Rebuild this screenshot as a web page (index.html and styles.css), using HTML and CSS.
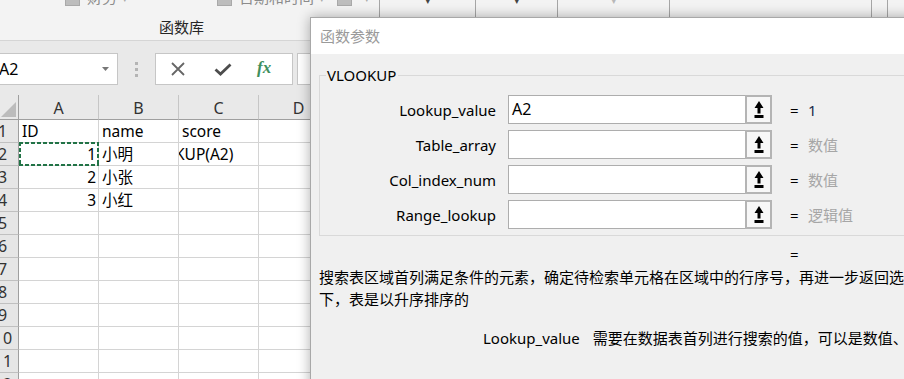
FILE: index.html
```html
<!DOCTYPE html>
<html lang="zh-CN">
<head>
    <meta charset="UTF-8">
    <title>函数参数</title>
    <link rel="stylesheet" href="styles.css">
</head>
<body>
<div class="excel">
    <div class="ribbon">
        <div class="ribbon-strip">
            <span class="rb-gap"></span>
            <span class="rb-item rb-w1"><i class="rb-icon"></i>财务<b class="rb-caret">▾</b></span>
            <span class="rb-item rb-w2"><i class="rb-icon"></i>日期和时间<b class="rb-caret">▾</b></span>
            <span class="rb-item rb-w3"><i class="rb-icon"></i><b class="rb-caret">▾</b></span>
            <span class="rb-seg rb-s1"><b class="rb-dark">▾</b></span>
            <span class="rb-seg rb-s2"><b class="rb-dark">▾</b></span>
            <span class="rb-seg rb-s3"><b class="rb-light">▾</b></span>
            <span class="rb-seg rb-s4"></span>
            <span class="rb-seg rb-s5"></span>
            <span class="rb-seg rb-s6"></span>
        </div>
        <div class="ribbon-group">函数库</div>
    </div>

    <div class="formula-bar">
        <div class="name-box">
            <span>A2</span>
            <svg width="7" height="4" viewBox="0 0 7 4"><polygon points="0,0 7,0 3.5,4" fill="#777"/></svg>
        </div>
        <div class="fb-grip"><i></i><i></i><i></i></div>
        <div class="fb-buttons">
            <svg width="14" height="14" viewBox="0 0 14 14"><path d="M1 1 L13 13 M13 1 L1 13" stroke="#666" stroke-width="1.8" fill="none"/></svg>
            <svg width="18" height="13" viewBox="0 0 18 13"><path d="M1.5 6.5 L6.5 11 L16.5 1.5" stroke="#4d4d4d" stroke-width="2.8" fill="none"/></svg>
            <span class="fx">fx</span>
        </div>
        <div class="fb-input"></div>
    </div>

    <div class="sheet">
        <div class="cell corner"><svg width="15" height="15" viewBox="0 0 15 15"><polygon points="15,0 15,15 0,15" fill="#bcbcbc"/></svg></div>
        <div class="cell ch">A</div>
        <div class="cell ch">B</div>
        <div class="cell ch">C</div>
        <div class="cell ch">D</div>
        <div class="cell ch">E</div>

        <div class="cell rh">1</div>
        <div class="cell">ID</div>
        <div class="cell">name</div>
        <div class="cell">score</div>
        <div class="cell"></div>
        <div class="cell"></div>

        <div class="cell rh">2</div>
        <div class="cell num copied">1</div>
        <div class="cell">小明</div>
        <div class="cell editing">KUP(A2)</div>
        <div class="cell"></div>
        <div class="cell"></div>

        <div class="cell rh">3</div>
        <div class="cell num">2</div>
        <div class="cell">小张</div>
        <div class="cell"></div>
        <div class="cell"></div>
        <div class="cell"></div>

        <div class="cell rh">4</div>
        <div class="cell num">3</div>
        <div class="cell">小红</div>
        <div class="cell"></div>
        <div class="cell"></div>
        <div class="cell"></div>

        <div class="cell rh">5</div>
        <div class="cell"></div><div class="cell"></div><div class="cell"></div><div class="cell"></div><div class="cell"></div>
        <div class="cell rh">6</div>
        <div class="cell"></div><div class="cell"></div><div class="cell"></div><div class="cell"></div><div class="cell"></div>
        <div class="cell rh">7</div>
        <div class="cell"></div><div class="cell"></div><div class="cell"></div><div class="cell"></div><div class="cell"></div>
        <div class="cell rh">8</div>
        <div class="cell"></div><div class="cell"></div><div class="cell"></div><div class="cell"></div><div class="cell"></div>
        <div class="cell rh">9</div>
        <div class="cell"></div><div class="cell"></div><div class="cell"></div><div class="cell"></div><div class="cell"></div>
        <div class="cell rh">10</div>
        <div class="cell"></div><div class="cell"></div><div class="cell"></div><div class="cell"></div><div class="cell"></div>
        <div class="cell rh">11</div>
        <div class="cell"></div><div class="cell"></div><div class="cell"></div><div class="cell"></div><div class="cell"></div>
        <div class="cell rh">12</div>
        <div class="cell"></div><div class="cell"></div><div class="cell"></div><div class="cell"></div><div class="cell"></div>
    </div>
</div>

<div class="dialog">
    <div class="dlg-title">函数参数</div>
    <div class="dlg-body">
        <fieldset class="fn-group">
            <legend>VLOOKUP</legend>

            <div class="arg-row">
                <label class="arg-label">Lookup_value</label>
                <div class="arg-box">
                    <div class="arg-text">A2</div>
                    <div class="arg-btn">
                        <svg width="10" height="17" viewBox="0 0 10 17"><polygon points="5,0 9.5,7 6.5,7 6.5,12.5 3.5,12.5 3.5,7 0.5,7" fill="#000"/><rect x="0.5" y="14" width="9" height="3" fill="#000"/></svg>
                    </div>
                </div>
                <span class="arg-eq">=</span>
                <span class="arg-val">1</span>
            </div>

            <div class="arg-row">
                <label class="arg-label">Table_array</label>
                <div class="arg-box">
                    <div class="arg-text"></div>
                    <div class="arg-btn">
                        <svg width="10" height="17" viewBox="0 0 10 17"><polygon points="5,0 9.5,7 6.5,7 6.5,12.5 3.5,12.5 3.5,7 0.5,7" fill="#000"/><rect x="0.5" y="14" width="9" height="3" fill="#000"/></svg>
                    </div>
                </div>
                <span class="arg-eq">=</span>
                <span class="arg-val hint">数值</span>
            </div>

            <div class="arg-row">
                <label class="arg-label">Col_index_num</label>
                <div class="arg-box">
                    <div class="arg-text"></div>
                    <div class="arg-btn">
                        <svg width="10" height="17" viewBox="0 0 10 17"><polygon points="5,0 9.5,7 6.5,7 6.5,12.5 3.5,12.5 3.5,7 0.5,7" fill="#000"/><rect x="0.5" y="14" width="9" height="3" fill="#000"/></svg>
                    </div>
                </div>
                <span class="arg-eq">=</span>
                <span class="arg-val hint">数值</span>
            </div>

            <div class="arg-row">
                <label class="arg-label">Range_lookup</label>
                <div class="arg-box">
                    <div class="arg-text"></div>
                    <div class="arg-btn">
                        <svg width="10" height="17" viewBox="0 0 10 17"><polygon points="5,0 9.5,7 6.5,7 6.5,12.5 3.5,12.5 3.5,7 0.5,7" fill="#000"/><rect x="0.5" y="14" width="9" height="3" fill="#000"/></svg>
                    </div>
                </div>
                <span class="arg-eq">=</span>
                <span class="arg-val hint">逻辑值</span>
            </div>
        </fieldset>

        <div class="result">=</div>

        <div class="desc">
            <div>搜索表区域首列满足条件的元素，确定待检索单元格在区域中的行序号，再进一步返回选定单元格的值。默认情况</div>
            <div>下，表是以升序排序的</div>
        </div>

        <div class="arg-help">
            <span class="help-name">Lookup_value</span>
            <span>需要在数据表首列进行搜索的值，可以是数值、引用或字符串</span>
        </div>
    </div>
</div>
</body>
</html>
```

FILE: styles.css
```css
body {
    margin: 0;
    width: 904px;
    height: 379px;
    overflow: hidden;
    position: relative;
    background: #ffffff;
    font-family: "Noto Sans", "Noto Sans CJK SC", sans-serif;
    color: #000;
}

/* ---- Ribbon ---- */
.ribbon {
    height: 40px;
    background: #f3f3f3;
    border-bottom: 1px solid #d5d5d5;
}

.ribbon-strip {
    display: flex;
    height: 17px;
    overflow: hidden;
    font-size: 15px;
    color: #8c8c8c;
}

.rb-gap {
    width: 65px;
    flex: none;
}

.rb-item {
    flex: none;
    display: flex;
    align-items: flex-start;
    margin-top: -11px;
    line-height: 17px;
}

.rb-w1 { width: 152px; }
.rb-w2 { width: 120px; }
.rb-w3 { width: 42px; }

.rb-icon {
    width: 15px;
    height: 15px;
    margin: 2px 7px 0 0;
    background: #bdbdbd;
    border: 1px solid #a9a9a9;
    box-sizing: border-box;
}

.rb-caret {
    font-weight: normal;
    font-size: 11px;
    color: #a8a8a8;
    margin-left: 5px;
}

.rb-seg {
    flex: none;
    border-left: 1px solid #a6a6a6;
    box-sizing: border-box;
    display: flex;
    justify-content: center;
    align-items: flex-start;
    font-size: 11px;
    line-height: 6px;
}

.rb-s1 { width: 96px; }
.rb-s2 { width: 82px; }
.rb-s3 { width: 112px; }
.rb-s4 { width: 202px; }
.rb-s5 { width: 16px; }
.rb-s6 { width: 40px; }

.rb-dark, .rb-light {
    font-weight: normal;
    margin-top: -3px;
    color: #444;
}

.rb-light {
    color: #b8b8b8;
}

.ribbon-group {
    padding-left: 159px;
    font-size: 15px;
    line-height: 21px;
    color: #262626;
}

/* ---- Formula bar ---- */
.formula-bar {
    height: 54px;
    background: #e9e9e9;
    display: flex;
    align-items: flex-start;
    padding-top: 12px;
    box-sizing: border-box;
}

.name-box {
    width: 118px;
    height: 32px;
    box-sizing: border-box;
    background: #fff;
    border: 1px solid #c6c6c6;
    border-left: none;
    display: flex;
    align-items: center;
    justify-content: space-between;
    padding-right: 8px;
    font-size: 16px;
}

.name-box span {
    margin-left: -1px;
}

.fb-grip {
    width: 37px;
    height: 32px;
    display: flex;
    flex-direction: column;
    align-items: center;
    justify-content: center;
    gap: 3px;
}

.fb-grip i {
    width: 3px;
    height: 3px;
    background: #b4b4b4;
}

.fb-buttons {
    width: 138px;
    height: 32px;
    box-sizing: border-box;
    background: #fff;
    border: 1px solid #c6c6c6;
    display: flex;
    align-items: center;
    padding-left: 15px;
    gap: 29px;
}

.fx {
    font-family: "Liberation Serif", serif;
    font-style: italic;
    font-weight: bold;
    font-size: 17px;
    color: #3f8f5e;
    margin-left: -4px;
    margin-top: -2px;
}

.fb-input {
    margin-left: 4px;
    width: 200px;
    height: 32px;
    box-sizing: border-box;
    background: #fff;
    border: 1px solid #c6c6c6;
}

/* ---- Sheet grid ---- */
.sheet {
    display: grid;
    grid-template-columns: 31px repeat(5, 80px);
    grid-template-rows: 25px repeat(12, 23px);
    margin-left: -12px;
    font-size: 15.5px;
}

.cell {
    box-sizing: border-box;
    border-right: 1px solid #d4d4d4;
    border-bottom: 1px solid #d4d4d4;
    padding: 0 3px;
    line-height: 22px;
    white-space: nowrap;
    overflow: hidden;
    position: relative;
}

.corner {
    background: #e9e9e9;
    border-right: 1px solid #9f9f9f;
    border-bottom: 1px solid #9f9f9f;
    display: flex;
    justify-content: flex-end;
    align-items: flex-end;
    padding: 0 2px 2px 0;
}

.ch {
    background: #e9e9e9;
    border-right: 1px solid #c6c6c6;
    border-bottom: 1px solid #9f9f9f;
    text-align: center;
    font-size: 16px;
    line-height: 26px;
    color: #333;
}

.rh {
    background: #e6e6e6;
    border-right: 1px solid #9f9f9f;
    border-bottom: 1px solid #c0c0c0;
    display: flex;
    justify-content: center;
    font-size: 16px;
    letter-spacing: 1px;
    color: #333;
    padding: 0;
}

.num {
    text-align: right;
    padding-right: 2px;
}

.editing {
    padding-left: 0;
    text-indent: -4px;
}

.copied {
    overflow: visible;
}

.copied::after {
    content: "";
    position: absolute;
    left: 0;
    top: -1px;
    right: -1px;
    bottom: -1px;
    background:
        repeating-linear-gradient(90deg, #217346 0 4px, transparent 4px 6px) top / 100% 2px no-repeat,
        repeating-linear-gradient(90deg, #217346 0 4px, transparent 4px 6px) bottom / 100% 2px no-repeat,
        repeating-linear-gradient(180deg, #217346 0 4px, transparent 4px 6px) left / 2px 100% no-repeat,
        repeating-linear-gradient(180deg, #217346 0 4px, transparent 4px 6px) right / 2px 100% no-repeat;
}

/* ---- Function arguments dialog ---- */
.dialog {
    position: absolute;
    left: 310px;
    top: 17px;
    width: 720px;
    height: 400px;
    background: #f0f0f0;
    border: 1px solid #a8a8a8;
    box-shadow: 0 0 12px rgba(0, 0, 0, 0.32);
    font-size: 15px;
}

.dlg-title {
    height: 36px;
    background: #fff;
    padding-left: 9px;
    line-height: 36px;
    color: #9a9a9a;
}

.dlg-body {
    padding-left: 8px;
    padding-top: 11px;
}

.fn-group {
    margin: 0;
    padding: 10px 0 6px 0;
    border: 1px solid #d9d9d9;
    min-width: 0;
}

.fn-group legend {
    margin-left: 6px;
    padding: 0 2px 0 1px;
    line-height: 20px;
    font-weight: normal;
}

.arg-row {
    display: flex;
    align-items: center;
    height: 29px;
    margin-bottom: 6px;
}

.arg-row:last-child {
    margin-bottom: 0;
}

.arg-label {
    width: 176px;
    text-align: right;
    flex: none;
}

.arg-box {
    display: flex;
    width: 264px;
    height: 29px;
    margin-left: 12px;
    flex: none;
}

.arg-text {
    flex: 1;
    background: #fff;
    border: 1px solid #adadad;
    border-right: none;
    padding-left: 3px;
    font-size: 16px;
    line-height: 27px;
}

.arg-btn {
    width: 27px;
    box-sizing: border-box;
    border: 2px solid #b4b4b4;
    background: #f7f7f7;
    display: flex;
    align-items: center;
    justify-content: center;
}

.arg-eq {
    margin-left: 18px;
    width: 18px;
}

.arg-val {
    color: #1a2a4a;
}

.arg-val.hint {
    color: #a6a6a6;
}

.result {
    margin-top: 8px;
    padding-left: 471px;
    line-height: 20px;
}

.desc {
    margin-top: 2px;
    line-height: 22px;
    white-space: nowrap;
}

.arg-help {
    margin-top: 17px;
    padding-left: 164px;
    line-height: 22px;
    white-space: nowrap;
}

.help-name {
    margin-right: 9px;
}
```
